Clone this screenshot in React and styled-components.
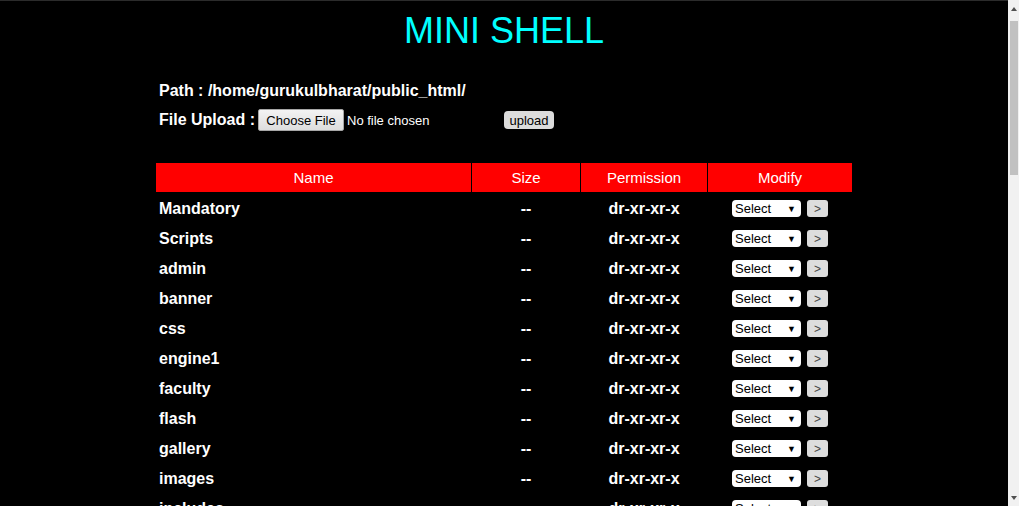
import styled, { createGlobalStyle } from "styled-components"

const GlobalStyle = createGlobalStyle`
  html, body {
    margin: 0;
    height: 100%;
    background: #000;
    overflow: hidden;
  }
`

const Shell = styled.div`
  display: flex;
  height: 100vh;
`

const Page = styled.div`
  flex: 1;
  min-width: 0;
  overflow: hidden;
  border-top: 1px solid #2b2b2b;
  color: #fff;
  font-family: "Liberation Sans", Arial, sans-serif;
`

const Title = styled.h1`
  margin: 10px 0 0;
  font-size: 36px;
  font-weight: normal;
  line-height: 40px;
  color: #00ffff;
  text-align: center;
`

const Main = styled.div`
  width: 696px;
  margin: 0 auto;
`

const Info = styled.div`
  padding: 30px 0 0 3px;
  font-size: 16px;
  font-weight: bold;
`

const PathLine = styled.div`
  line-height: 20px;
`

const UploadRow = styled.div`
  display: flex;
  align-items: center;
  height: 24px;
  margin-top: 7px;
`

const FilePicker = styled.div`
  display: flex;
  align-items: center;
  gap: 3px;
  width: 241px;
  margin-left: 3px;
`

const ChooseButton = styled.button`
  box-sizing: border-box;
  width: 86px;
  height: 22px;
  padding: 0;
  border: 1px solid #a6a6a6;
  border-radius: 2px;
  background: linear-gradient(#f3f3f3, #dddddd);
  color: #000;
  font: 13px "Liberation Sans", Arial, sans-serif;
`

const NoFile = styled.span`
  font: 13px "Liberation Sans", Arial, sans-serif;
  color: #fff;
`

const UploadButton = styled.button`
  width: 50px;
  height: 18px;
  margin-left: 5px;
  padding: 0;
  border: none;
  border-radius: 4px;
  background: #dcdcdc;
  color: #000;
  font: 13px "Liberation Sans", Arial, sans-serif;
`

const Table = styled.div`
  display: flex;
  flex-direction: column;
  gap: 1px;
  margin-top: 31px;
`

const Row = styled.div`
  display: grid;
  grid-template-columns: 315px 108px 126px 144px;
  column-gap: 1px;
`

const HeadCell = styled.div`
  height: 29px;
  display: flex;
  align-items: center;
  justify-content: center;
  background: #ff0000;
  font-size: 15px;
`

const Cell = styled.div`
  box-sizing: border-box;
  height: 29px;
  padding-top: 2px;
  display: flex;
  align-items: center;
  justify-content: ${(p) => (p.$left ? "flex-start" : "center")};
  padding-left: ${(p) => (p.$left ? "3px" : "0")};
  gap: 6px;
  font-size: 16px;
  font-weight: bold;
`

const FakeSelect = styled.div`
  box-sizing: border-box;
  width: 69px;
  height: 17px;
  padding: 0 5px 0 3px;
  display: flex;
  align-items: center;
  justify-content: space-between;
  background: #fff;
  border-radius: 4px;
  color: #000;
  font: 13px "Liberation Sans", Arial, sans-serif;
`

const Arrow = styled.span`
  font-size: 9px;
`

const GoButton = styled.button`
  width: 21px;
  height: 17px;
  padding: 0;
  border: none;
  border-radius: 3px;
  background: #dddddd;
  color: #444;
  font: 12px "Liberation Sans", Arial, sans-serif;
`

const ScrollRail = styled.div`
  width: 11px;
  height: 100vh;
  display: flex;
  flex-direction: column;
  background: #f1f1f1;
`

const RailButton = styled.div`
  height: 17px;
  display: flex;
  align-items: center;
  justify-content: center;
  padding-left: 1px;
`

const Triangle = styled.div`
  width: 0;
  height: 0;
  border-left: 3px solid transparent;
  border-right: 3px solid transparent;
  ${(p) => (p.$down ? "border-top" : "border-bottom")}: 4px solid #505050;
`

const Track = styled.div`
  flex: 1;
  padding: 4px 1px 0 2px;
`

const Thumb = styled.div`
  height: 154px;
  background: #c1c1c1;
`

const folders = [
  "Mandatory",
  "Scripts",
  "admin",
  "banner",
  "css",
  "engine1",
  "faculty",
  "flash",
  "gallery",
  "images",
  "includes",
  "js",
]

const App = () => {
  return (
    <Shell>
      <GlobalStyle />
      <Page>
        <Title>MINI SHELL</Title>
        <Main>
          <Info>
            <PathLine>Path : /home/gurukulbharat/public_html/</PathLine>
            <UploadRow>
              File Upload :
              <FilePicker>
                <ChooseButton>Choose File</ChooseButton>
                <NoFile>No file chosen</NoFile>
              </FilePicker>
              <UploadButton>upload</UploadButton>
            </UploadRow>
          </Info>

          <Table>
            <Row>
              <HeadCell>Name</HeadCell>
              <HeadCell>Size</HeadCell>
              <HeadCell>Permission</HeadCell>
              <HeadCell>Modify</HeadCell>
            </Row>
            {folders.map((name) => (
              <Row key={name}>
                <Cell $left>{name}</Cell>
                <Cell>--</Cell>
                <Cell>dr-xr-xr-x</Cell>
                <Cell>
                  <FakeSelect>
                    Select <Arrow>▼</Arrow>
                  </FakeSelect>
                  <GoButton>&gt;</GoButton>
                </Cell>
              </Row>
            ))}
          </Table>
        </Main>
      </Page>

      <ScrollRail>
        <RailButton>
          <Triangle />
        </RailButton>
        <Track>
          <Thumb />
        </Track>
        <RailButton>
          <Triangle $down />
        </RailButton>
      </ScrollRail>
    </Shell>
  )
}

export default App
